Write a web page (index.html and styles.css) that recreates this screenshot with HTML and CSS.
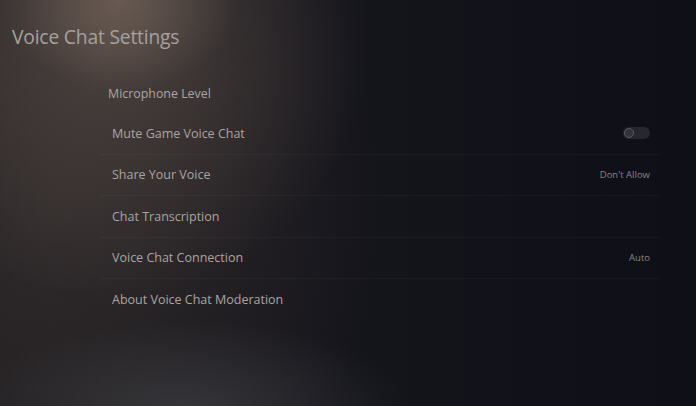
FILE: index.html
```html
<!DOCTYPE html>
<html>
<head>
<meta charset="utf-8">
<link rel="stylesheet" href="styles.css">
</head>
<body>
<div class="screen">
  <h1 class="title">Voice Chat Settings</h1>
  <div class="list">
    <div class="mic">Microphone Level</div>
    <div class="row"><span class="label">Mute Game Voice Chat</span><span class="toggle"><span class="knob"></span></span></div>
    <div class="row"><span class="label">Share Your Voice</span><span class="value">Don't Allow</span></div>
    <div class="row"><span class="label">Chat Transcription</span></div>
    <div class="row"><span class="label">Voice Chat Connection</span><span class="value">Auto</span></div>
    <div class="row last"><span class="label">About Voice Chat Moderation</span></div>
  </div>
</div>
</body>
</html>
```
FILE: styles.css
```css
html, body {
  margin: 0;
  padding: 0;
  width: 696px;
  height: 406px;
  overflow: hidden;
}
.screen {
  width: 696px;
  height: 406px;
  box-sizing: border-box;
  font-family: "Open Sans", "Noto Sans", sans-serif;
  color: #aaa5a2;
  background:
    radial-gradient(ellipse 120px 90px at 120px 0px, rgba(140,120,105,0.5), rgba(140,120,105,0) 100%),
    radial-gradient(ellipse 260px 260px at 110px 40px, rgba(90,78,72,0.7), rgba(90,78,72,0) 100%),
    radial-gradient(ellipse 220px 90px at 190px 410px, rgba(70,72,76,0.55), rgba(70,72,76,0) 100%),
    radial-gradient(ellipse 320px 420px at 60px 200px, rgba(52,46,46,0.8), rgba(52,46,46,0) 100%),
    linear-gradient(90deg, #1d1b1f 0%, #14141b 55%, #0e0f17 100%);
  padding: 20px 0 0 0;
}
.title {
  margin: 0 0 0 12px;
  font-weight: 400;
  font-size: 19.3px;
  line-height: 34px;
  color: #a6a19f;
  letter-spacing: -0.2px;
}
.list {
  margin: 24px 0 0 100px;
  width: 560px;
}
.mic {
  padding-left: 8px;
  height: 35px;
  line-height: 32px;
  font-size: 12.4px;
  color: #aaa5a2;
}
.row {
  display: flex;
  align-items: center;
  justify-content: space-between;
  height: 40.5px;
  padding: 0 10px 0 12px;
  border-bottom: 1px solid rgba(255,255,255,0.035);
  font-size: 12.5px;
}
.row.last {
  border-bottom: none;
}
.label {
  color: #aaa5a2;
}
.value {
  font-size: 9.5px;
  color: #88858a;
}
.toggle {
  width: 27px;
  height: 12px;
  border-radius: 6px;
  background: #27272e;
  display: flex;
  align-items: center;
  padding-left: 1px;
  box-sizing: border-box;
}
.knob {
  width: 10px;
  height: 10px;
  border-radius: 50%;
  box-sizing: border-box;
  border: 1.5px solid #595960;
  background: #323239;
}
```
